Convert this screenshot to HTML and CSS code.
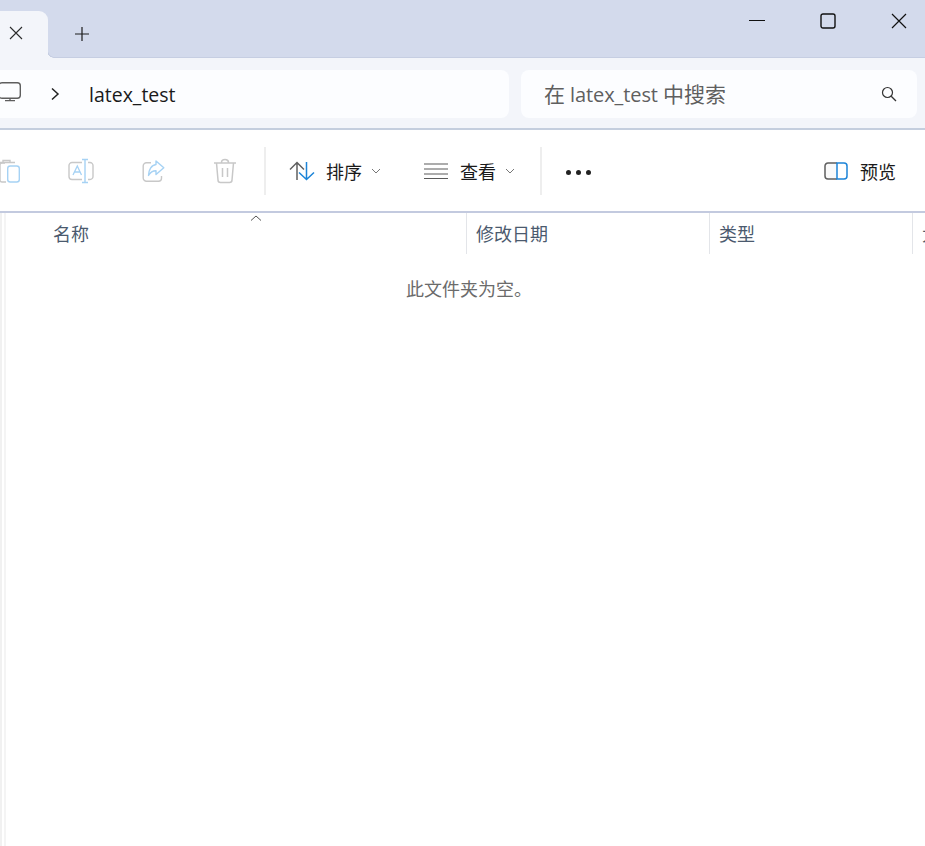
FILE: index.html
```html
<!DOCTYPE html>
<html lang="zh-CN">
<head>
<meta charset="utf-8">
<title>latex_test</title>
<link rel="stylesheet" href="styles.css">
</head>
<body>
<div class="window">
  <header class="titlebar">
    <div class="tab">
      <svg class="icon-tab-close" width="14" height="14" viewBox="0 0 14 14"><path d="M1 1 13 13M13 1 1 13" stroke="#2b2b2b" stroke-width="1.1" fill="none"/></svg>
    </div>
    <svg class="icon-new" width="16" height="16" viewBox="0 0 16 16"><path d="M8 1V15M1 8H15" stroke="#1c1c1c" stroke-width="1.2" fill="none"/></svg>
    <div class="controls">
      <svg width="16" height="16" viewBox="0 0 16 16"><path d="M0 7.500H16" stroke="#111" stroke-width="1"/></svg>
      <svg width="16" height="16" viewBox="0 0 16 16"><rect x="1" y="1" width="14" height="14" rx="2" stroke="#111" stroke-width="1.4" fill="none"/></svg>
      <svg width="16" height="16" viewBox="0 0 16 16"><path d="M1 1 15 15M15 1 1 15" stroke="#111" stroke-width="1.2" fill="none"/></svg>
    </div>
  </header>

  <div class="addressband">
    <div class="crumbs">
      <svg class="icon-pc" width="22" height="22" viewBox="0 0 22 22"><rect x="-1" y="1.700" width="21.300" height="15.600" rx="3" stroke="#5e5e5e" stroke-width="1.400" fill="none"/><path d="M5 19.700H15M10 17.500V19.700" stroke="#5e5e5e" stroke-width="1.300" fill="none"/></svg>
      <svg class="icon-chev" width="10" height="14" viewBox="0 0 10 14"><path d="M2 1.500 8 7 2 12.500" stroke="#222" stroke-width="1.500" fill="none"/></svg>
      <span class="crumb">latex_test</span>
    </div>
    <div class="search">
      <span class="search-text"><span class="cjk">在</span> latex_test <span class="cjk">中搜索</span></span>
      <svg class="icon-search" width="18" height="18" viewBox="0 0 18 18"><circle cx="7.500" cy="7.500" r="5" stroke="#333" stroke-width="1.200" fill="none"/><path d="M11.200 11.200 16 16" stroke="#333" stroke-width="1.300" fill="none"/></svg>
    </div>
  </div>

  <div class="toolbar">
    <div class="tools-disabled">
      <svg class="icon-paste" width="22" height="26" viewBox="0 0 22 26"><path d="M5 5H2a2 2 0 0 0-2 2v15a2 2 0 0 0 2 2h4" stroke="#c8c8c8" stroke-width="1.400" fill="none"/><path d="M0 4.500h15M3 4.500V2.500h7V4.500" stroke="#c8c8c8" stroke-width="1.400" fill="none"/><rect x="7.700" y="8" width="11.600" height="16" rx="2.500" stroke="#a6d2f4" stroke-width="1.400" fill="none"/></svg>
      <svg class="icon-rename" width="26" height="26" viewBox="0 0 26 26"><path d="M14 4.500H4a3 3 0 0 0-3 3v11a3 3 0 0 0 3 3h10M20 4.500h2a3 3 0 0 1 3 3v11a3 3 0 0 1-3 3h-2" stroke="#c8c8c8" stroke-width="1.400" fill="none"/><path d="M14 1.500h6M14 24.500h6M17 1.500V24.500" stroke="#a6d2f4" stroke-width="1.400" fill="none"/><path d="M5 17 9.300 8 13.500 17M6.500 14H12" stroke="#a6d2f4" stroke-width="1.300" fill="none"/></svg>
      <svg class="icon-share" width="24" height="24" viewBox="0 0 24 24"><path d="M9 3.700H4.500a3.300 3.300 0 0 0-3.300 3.300v12a3.300 3.300 0 0 0 3.300 3.300h12a3 3 0 0 0 3-3V17" stroke="#c8c8c8" stroke-width="1.400" fill="none"/><path d="M14 2 21.800 8.800 14 15.500V11.800C11 11.800 8.500 13 6.500 16.500 6.500 11 9.500 6 14 5.500Z" stroke="#a6d2f4" stroke-width="1.400" fill="none" stroke-linejoin="round"/></svg>
      <svg class="icon-trash" width="24" height="26" viewBox="0 0 24 26"><path d="M1 5H23M8.500 5V4.500a3.500 3 0 0 1 7 0V5M3.500 5 5 22a2.500 2.500 0 0 0 2.500 2.500h9A2.500 2.500 0 0 0 19 22L20.500 5M9.500 10V19M14.500 10V19" stroke="#c8c8c8" stroke-width="1.500" fill="none"/></svg>
    </div>
    <span class="sep"></span>
    <div class="tool tool-sort">
      <svg width="26" height="20" viewBox="0 0 26 20"><path d="M8 19V1.500M1 8.500 8 1.500 15 8.500" stroke="#606060" stroke-width="1.500" fill="none"/><path d="M17.500 1V18.500M10 11.500 17.500 18.500 25 11.500" stroke="#1c84d8" stroke-width="1.500" fill="none"/></svg>
      <span class="tool-label">排序</span>
      <svg class="caret" width="10" height="6" viewBox="0 0 10 6"><path d="M1 1 5 5 9 1" stroke="#777" stroke-width="1" fill="none"/></svg>
    </div>
    <div class="tool tool-view">
      <svg width="24" height="16" viewBox="0 0 24 16"><path d="M0 1H24M0 6H24M0 11H24M0 15.500H24" stroke="#5a5a5a" stroke-width="1.100" fill="none"/></svg>
      <span class="tool-label">查看</span>
      <svg class="caret" width="10" height="6" viewBox="0 0 10 6"><path d="M1 1 5 5 9 1" stroke="#777" stroke-width="1" fill="none"/></svg>
    </div>
    <span class="sep sep-second"></span>
    <div class="more"><i></i><i></i><i></i></div>
    <div class="tool tool-preview">
      <svg width="24" height="18" viewBox="0 0 24 18"><path d="M13 1H4a3 3 0 0 0-3 3v10a3 3 0 0 0 3 3h9" stroke="#5f5f5f" stroke-width="1.500" fill="#fafafa"/><path d="M13 1h7a3 3 0 0 1 3 3v10a3 3 0 0 1-3 3h-7Z" stroke="#1c84d8" stroke-width="1.500" fill="#fff"/></svg>
      <span class="tool-label">预览</span>
    </div>
  </div>

  <div class="content">
    <div class="sidebar-edge"></div>
    <div class="files">
      <div class="columns">
        <div class="col col-name">名称
          <svg class="sort-arrow" width="12" height="6" viewBox="0 0 12 6"><path d="M1 5.500 6 1 11 5.500" stroke="#555" stroke-width="1" fill="none"/></svg>
        </div>
        <div class="col col-date">修改日期</div>
        <div class="col col-type">类型</div>
        <div class="col col-size">大小</div>
      </div>
      <p class="empty">此文件夹为空。</p>
    </div>
  </div>
</div>
</body>
</html>
```
FILE: styles.css
```css
* { box-sizing: border-box; }
html, body { margin: 0; padding: 0; height: 100%; overflow: hidden; background: #fff; }
body { font-family: "Noto Sans CJK SC", "Open Sans", sans-serif; }
.window { width: 925px; height: 846px; display: flex; flex-direction: column; overflow: hidden; }

.titlebar { height: 58px; background: #d3daec; border-bottom: 1px solid #c6cee2; display: flex; position: relative; flex: none; }
.tab { width: 48px; height: 47px; margin-top: 11px; background: #f3f5fa; border-top-right-radius: 9px; display: flex; align-items: center; position: relative; z-index: 1; }
.tab::after { content: ""; position: absolute; right: -6px; bottom: 0; width: 6px; height: 7px; background: radial-gradient(circle at 100% 0, #d3daec 5.500px, #c6cee2 6px, #c6cee2 6.500px, #f3f5fa 7px); }
.icon-tab-close { margin: -3px 0 0 9px; }
.icon-new { margin: 26px 0 0 26px; }
.controls { margin-left: auto; display: flex; gap: 55px; padding: 13px 18px 0 0; height: 30px; }

.addressband { height: 72px; flex: none; background: #f3f5fa; border-bottom: 2px solid #c4cede; display: flex; gap: 12px; padding: 12px 8px 10px 0; }
.crumbs { width: 509px; height: 48px; background: #fcfdff; border-radius: 0 8px 8px 0; display: flex; align-items: center; }
.icon-pc { margin-top: -4px; }
.icon-chev { margin-left: 28px; }
.crumb { margin: 2px 0 0 29px; font-family: "Open Sans", "Noto Sans CJK SC", sans-serif; font-size: 19.500px; color: #1a1a1a; line-height: 46px; }
.search { flex: 1; height: 48px; background: #fcfdff; border-radius: 8px; display: flex; align-items: center; padding: 0 19px 0 23px; justify-content: space-between; }
.search-text { font-family: "Open Sans", "Noto Sans CJK SC", sans-serif; font-size: 20px; color: #5f5f5f; letter-spacing: -0.1px; line-height: 46px; }
.cjk { font-family: "Noto Sans CJK SC", sans-serif; font-size: 21px; letter-spacing: 0; }

.toolbar { height: 83px; flex: none; background: #fff; border-bottom: 2px solid #c3cadf; display: flex; align-items: center; padding-top: 1px; position: relative; }
.tools-disabled { width: 264px; display: flex; align-items: center; height: 30px; flex: none; }
.tools-disabled svg { flex: none; }
.icon-rename { margin-left: 46px; }
.icon-share { margin-left: 48px; }
.icon-trash { margin-left: 47px; }
.sep { width: 2px; height: 48px; background: #eeeeee; flex: none; }
.tool { display: flex; align-items: center; flex: none; }
.tool-label { font-size: 18px; color: #1a1a1a; line-height: 24px; }
.tool-sort { margin-left: 23px; }
.tool-sort .tool-label { margin-left: 11px; }
.caret { margin-left: 9px; }
.tool-view { margin-left: 43px; }
.tool-view .tool-label { margin-left: 12px; }
.sep-second { margin-left: 25px; }
.more { display: flex; gap: 5px; margin: 2px 0 0 24px; }
.more i { width: 5px; height: 5px; border-radius: 50%; background: #222; }
.tool-preview { margin-left: auto; margin-right: 29px; }
.tool-preview .tool-label { margin-left: 12px; }

.content { flex: 1; display: flex; }
.sidebar-edge { width: 6px; flex: none; background: #fff; border-left: 2px solid #f1f1f1; border-right: 2px solid #f4f4f4; }
.files { flex: 1; min-width: 0; }
.columns { display: flex; height: 41px; }
.col { font-size: 18px; line-height: 41px; color: #4b5a6e; flex: none; border-right: 1px solid #e3e5e9; position: relative; white-space: nowrap; overflow: hidden; }
.col-name { width: 461px; padding-left: 47px; overflow: visible; }
.col-date { width: 243px; padding-left: 9px; }
.col-type { width: 203px; padding-left: 9px; }
.col-size { width: 12px; padding-left: 9px; border-right: 0; }
.sort-arrow { position: absolute; left: 244px; top: 2px; }
.empty { margin: 22px 0 0; text-align: center; font-size: 18px; line-height: 24px; color: #6b6b6b; width: 919px; padding-left: 7px; }
```
